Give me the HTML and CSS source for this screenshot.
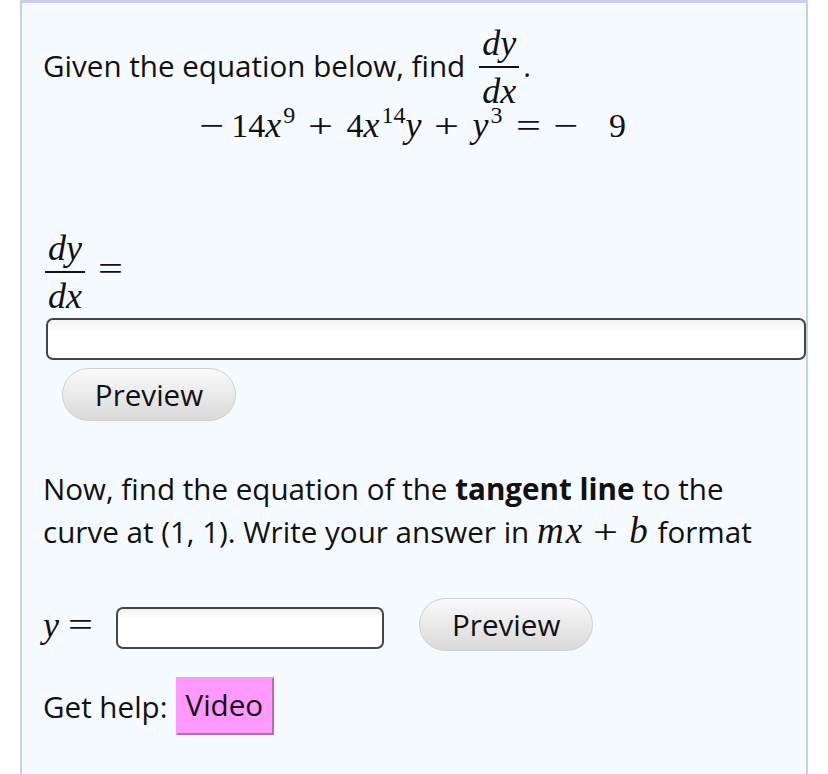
FILE: index.html
```html
<!DOCTYPE html>
<html lang="en">
<head>
  <meta charset="UTF-8">
  <meta name="viewport" content="width=device-width, initial-scale=1.0">
  <title>Implicit Differentiation</title>
  <link rel="stylesheet" href="styles.css">
</head>
<body>

  <div class="question">

    <!-- Part 1 -->
    <p class="intro">
      Given the equation below, find
      <span class="frac"><span class="num m">dy</span><span class="den m">dx</span></span>.
    </p>
    <div class="display">
      <span class="op lead">&minus;</span>
      <span class="mn">14</span>
      <span class="term"><span class="m">x</span><sup>9</sup></span>
      <span class="op bin">+</span>
      <span class="mn">4</span>
      <span class="term"><span class="m">x</span><sup>14</sup></span>
      <span class="m">y</span>
      <span class="op bin">+</span>
      <span class="term"><span class="m">y</span><sup>3</sup></span>
      <span class="op rel">=</span>
      <span class="op neg">&minus;</span>
      <span class="mn">9</span>
    </div>

    <div class="answer-label">
      <span class="frac"><span class="num m">dy</span><span class="den m">dx</span></span>
      <span class="op rel">=</span>
    </div>
    <input type="text" class="answer wide">
    <div class="btn-row">
      <button class="preview">Preview</button>
    </div>

    <!-- Part 2 -->
    <p class="part2">
      Now, find the equation of the <strong>tangent line</strong> to the
      curve at (1, 1). Write your answer in <span class="m">mx</span><span class="op">+</span><span class="m">b</span> format
    </p>

    <div class="line-row">
      <span class="m">y</span><span class="op rel">=</span>
      <input type="text" class="answer short">
      <button class="preview">Preview</button>
    </div>

    <div class="help">
      Get help: <a href="#" class="video">Video</a>
    </div>

  </div>

</body>
</html>
```

FILE: styles.css
```css
body {
  margin: 0;
  font-family: 'Open Sans', sans-serif;
  font-size: 29.6px;
  color: #111;
  background: #fff;
}

.question {
  margin-left: 20px;
  width: 788px;
  min-height: 800px;
  box-sizing: border-box;
  background-color: #f5faff;
  border-left: 2px solid #c3d3de;
  border-right: 2px solid #c3d3de;
  border-top: 3px solid #cdcdf2;
  padding: 20px 0 0 21px;
}

p {
  margin: 0;
  line-height: 42px;
}

/* math bits */
.m {
  font-family: 'Liberation Serif', serif;
  font-style: italic;
  font-size: 36px;
}
.mn, .op {
  font-family: 'Liberation Serif', serif;
  font-size: 34px;
}
sup {
  font-family: 'Liberation Serif', serif;
  font-size: 24px;
  vertical-align: 14px;
  line-height: 0;
  margin-left: 1px;
}
.op {
  display: inline-block;
  transform: scaleX(1.3);
}

.frac {
  display: inline-flex;
  flex-direction: column;
  align-items: center;
  vertical-align: middle;
  line-height: 36px;
}
.frac .num {
  border-bottom: 2px solid #111;
  padding: 0 3px 5px;
}
.frac .den {
  padding-top: 5px;
}

.intro {
  display: flex;
  align-items: center;
}
.intro .frac {
  margin: 2px 4px 0 14px;
}

.display {
  display: flex;
  justify-content: center;
  align-items: baseline;
  margin: -4px 0 0 -21px;
  line-height: 40px;
}
.display .lead { margin-right: 10px; }
.display .bin { margin: 0 16px; }
.display .rel { margin: 0 18px 0 16px; }
.display .neg { margin-right: 34px; }
.display .term sup { margin-left: 2px; }

.answer-label {
  display: flex;
  align-items: center;
  margin-top: 84px;
}
.answer-label .frac {
  margin: 0 0 0 2px;
}
.answer-label .rel {
  margin: -6px 0 0 16px;
}

.answer {
  box-sizing: border-box;
  height: 42px;
  border: 2px solid #454545;
  border-radius: 7px;
  background: linear-gradient(#f2f2f2, #fff 30%);
  font-size: 20px;
}
.wide {
  display: block;
  width: 760px;
  margin: 4px 0 0 3px;
}
.short {
  width: 268px;
}

.btn-row {
  padding: 8px 0 0 19px;
}

.preview {
  font-family: 'Open Sans', sans-serif;
  font-size: 29.6px;
  color: #111;
  width: 174px;
  height: 53px;
  padding: 0;
  border: 1px solid #cfcfcf;
  border-radius: 27px;
  background: linear-gradient(#fafafa, #d9d9d9);
  cursor: pointer;
}

.part2 {
  margin-top: 47px;
}
.part2 .m {
  font-size: 37px;
  letter-spacing: 2px;
}
.part2 .op {
  margin: 0 14px 0 12px;
}

.line-row {
  display: flex;
  align-items: center;
  margin-top: 45px;
}
.line-row .rel {
  margin: 0 26px 0 12px;
}
.line-row .answer {
  margin-top: 6px;
}
.line-row .preview {
  margin-left: 35px;
}

.help {
  display: flex;
  align-items: center;
  margin-top: 26px;
}
.video {
  display: inline-block;
  margin-left: 8px;
  padding: 9px 9px 11px 8px;
  line-height: 34px;
  background-color: #ff99ff;
  color: #111;
  text-decoration: none;
  border-top: 2px solid #ff99ff;
  border-left: 2px solid #ff99ff;
  border-right: 2px solid #b070b0;
  border-bottom: 2px solid #b070b0;
}
```
